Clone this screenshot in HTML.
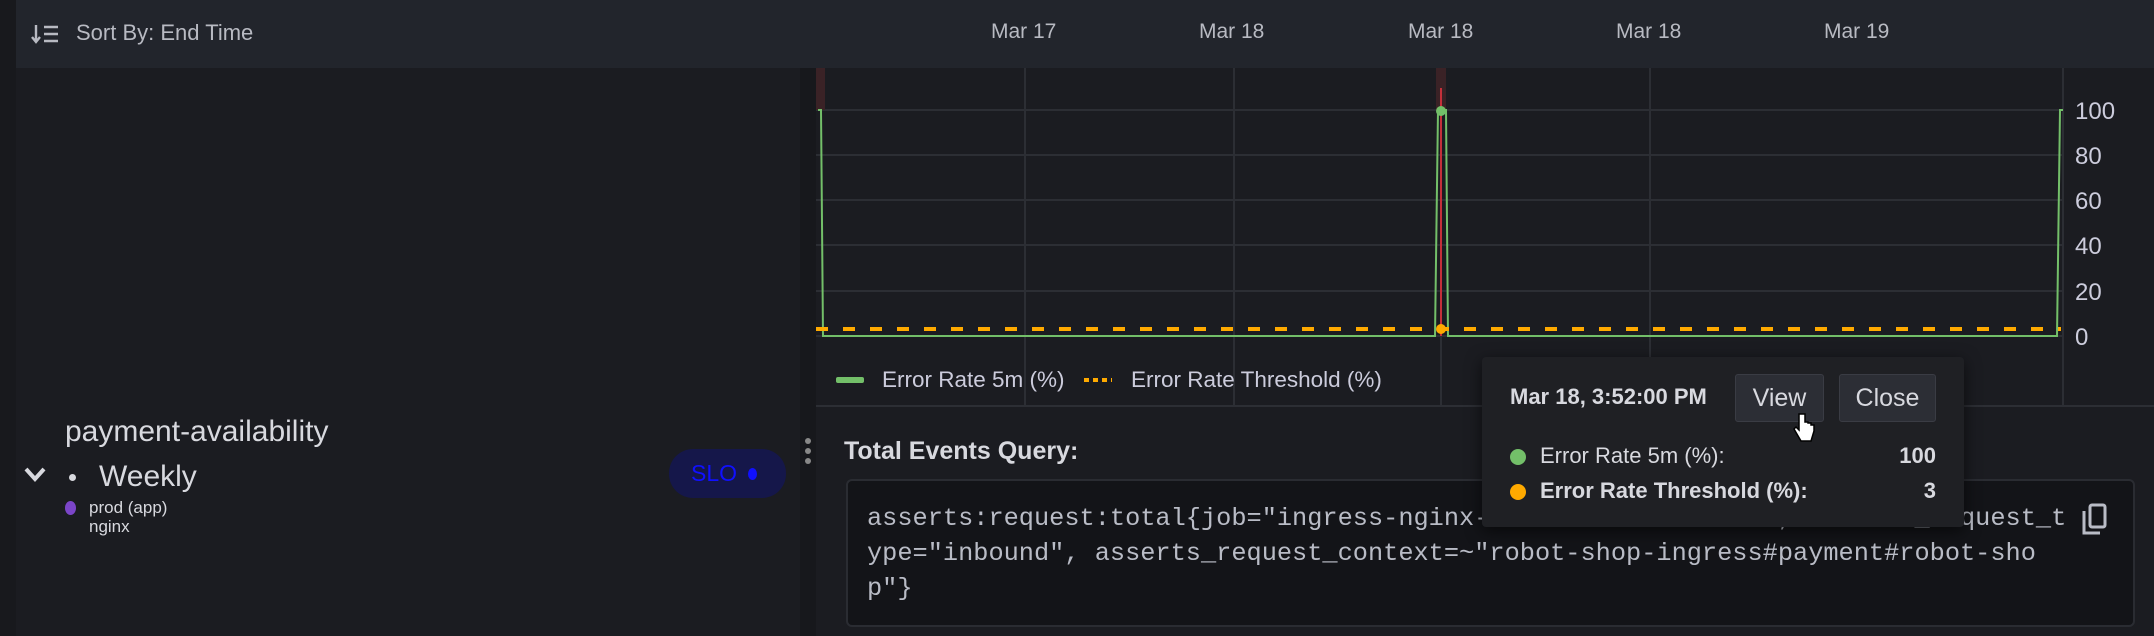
<!DOCTYPE html>
<html><head><meta charset="utf-8"><style>
*{margin:0;padding:0;box-sizing:border-box}
body{width:2154px;height:636px;background:#1b1c21;overflow:hidden;position:relative;font-family:"Liberation Sans",sans-serif;color:#ccccdc}
.a{position:absolute;white-space:nowrap}
.mono{font-family:"Liberation Mono",monospace;font-size:25.3px;color:#b9bcc6}
</style></head><body>
<div class="a" style="left:0;top:0;width:16px;height:636px;background:#18191d"></div>
<div class="a" style="left:16px;top:0;width:2138px;height:68px;background:#22252c"></div>
<svg class="a" style="left:30px;top:22px" width="32" height="24" viewBox="0 0 32 24"><path d="M6 3v16M2 15l4 5 4-5" stroke="#b8bac2" stroke-width="2.4" fill="none"/><path d="M14 5h14M14 12h14M14 19h14" stroke="#b8bac2" stroke-width="2.4"/></svg>
<div class="a" style="left:76px;top:20px;font-size:22px;color:#b8bac2">Sort By: End Time</div>
<div class="a" style="left:991px;top:20px;font-size:21px;color:#b8bac2">Mar 17</div>
<div class="a" style="left:1199px;top:20px;font-size:21px;color:#b8bac2">Mar 18</div>
<div class="a" style="left:1408px;top:20px;font-size:21px;color:#b8bac2">Mar 18</div>
<div class="a" style="left:1616px;top:20px;font-size:21px;color:#b8bac2">Mar 18</div>
<div class="a" style="left:1824px;top:20px;font-size:21px;color:#b8bac2">Mar 19</div>
<div class="a" style="left:800px;top:68px;width:16px;height:568px;background:#17181c"></div>
<svg class="a" style="left:816px;top:68px" width="1338" height="340">
<g stroke="#2c2e34" stroke-width="2">
<line x1="0" y1="42" x2="1247" y2="42"/><line x1="0" y1="87" x2="1247" y2="87"/><line x1="0" y1="132" x2="1247" y2="132"/><line x1="0" y1="177" x2="1247" y2="177"/><line x1="0" y1="223" x2="1247" y2="223"/><line x1="0" y1="268" x2="1247" y2="268"/>
<line x1="209" y1="0" x2="209" y2="338"/><line x1="418" y1="0" x2="418" y2="338"/><line x1="625" y1="0" x2="625" y2="338"/><line x1="834" y1="0" x2="834" y2="338"/><line x1="1247" y1="0" x2="1247" y2="338"/>
<line x1="0" y1="338" x2="1338" y2="338"/>
</g>
<rect x="0" y="0" width="9" height="42" fill="#3a2226"/>
<rect x="620" y="0" width="10" height="42" fill="#3a2226"/>
<line x1="625" y1="20" x2="625" y2="268" stroke="#c4303a" stroke-width="2"/>
<polyline points="2,42 5,42 7,268 619,268 622,42 630,42 632,268 1241,268 1244,42 1247,42" fill="none" stroke="#73bf69" stroke-width="2"/>
<line x1="0" y1="261" x2="1245" y2="261" stroke="#ffaa00" stroke-width="4" stroke-dasharray="12 15"/>
<circle cx="625" cy="43" r="5" fill="#73bf69"/><circle cx="625" cy="261" r="5" fill="#ffaa00"/>
<g fill="#ccccdc" font-size="24" font-family="Liberation Sans">
<text x="1259" y="51">100</text><text x="1259" y="96">80</text><text x="1259" y="141">60</text><text x="1259" y="186">40</text><text x="1259" y="232">20</text><text x="1259" y="277">0</text></g>
<rect x="20" y="309" width="28" height="6" rx="2" fill="#73bf69"/>
<text x="66" y="319" fill="#ccccdc" font-size="22.5" font-family="Liberation Sans">Error Rate 5m (%)</text>
<line x1="268" y1="312" x2="296" y2="312" stroke="#ffaa00" stroke-width="4" stroke-dasharray="5 4"/>
<text x="315" y="319" fill="#ccccdc" font-size="22.5" font-family="Liberation Sans">Error Rate Threshold (%)</text>
</svg>
<div class="a" style="left:65px;top:415px;font-size:30px;color:#d8d9df">payment-availability</div>
<svg class="a" style="left:22px;top:465px" width="28" height="20"><path d="M4 4l9 10 9-10" stroke="#d8d9df" stroke-width="4" fill="none"/></svg>
<div class="a" style="left:69px;top:474px;width:7px;height:7px;border-radius:50%;background:#d8d9df"></div>
<div class="a" style="left:99px;top:460px;font-size:30px;color:#d8d9df">Weekly</div>
<div class="a" style="left:65px;top:501px;width:11px;height:14px;border-radius:50%;background:#7b45c8"></div>
<div class="a" style="left:89px;top:498px;font-size:17px;line-height:19px;color:#d8d9df">prod (app)<br>nginx</div>
<div class="a" style="left:669px;top:449px;width:117px;height:49px;border-radius:24px;background:#15174a;color:#1010ff;font-size:23px;line-height:49px;padding-left:22px">SLO <span style="display:inline-block;width:9px;height:12px;border-radius:50%;background:#1010ff;vertical-align:1px;margin-left:5px"></span></div>
<div class="a" style="left:805px;top:438px;width:6px;height:6px;border-radius:50%;background:#888"></div>
<div class="a" style="left:805px;top:448px;width:6px;height:6px;border-radius:50%;background:#888"></div>
<div class="a" style="left:805px;top:458px;width:6px;height:6px;border-radius:50%;background:#888"></div>
<div class="a" style="left:844px;top:437px;font-size:25px;font-weight:bold;color:#d8d9df">Total Events Query:</div>
<div class="a" style="left:846px;top:479px;width:1289px;height:148px;background:#131418;border:2px solid #2a2c32;border-radius:6px"></div>
<div class="a mono" style="left:867px;top:501px;line-height:35px">asserts:request:total{job="ingress-nginx-controller-metrics", asserts_request_t<br>ype="inbound", asserts_request_context=~"robot-shop-ingress#payment#robot-sho<br>p"}</div>
<svg class="a" style="left:2080px;top:502px" width="30" height="36"><rect x="10" y="3" width="15" height="22" rx="2" stroke="#b9bcc6" stroke-width="3" fill="none"/><path d="M4 9v22h16" stroke="#b9bcc6" stroke-width="3" fill="none"/></svg>
<div class="a" style="left:1482px;top:357px;width:482px;height:170px;background:#1f2024;border-radius:4px;box-shadow:0 4px 16px rgba(0,0,0,.6)"></div>
<div class="a" style="left:1510px;top:384px;font-size:22px;font-weight:bold;color:#d8d9df">Mar 18, 3:52:00 PM</div>
<div class="a" style="left:1735px;top:374px;width:89px;height:48px;background:#2c2e35;border:1px solid #3a3c44;border-radius:3px;font-size:25px;line-height:46px;text-align:center;color:#d8d9df">View</div>
<div class="a" style="left:1839px;top:374px;width:97px;height:48px;background:#2c2e35;border:1px solid #3a3c44;border-radius:3px;font-size:25px;line-height:46px;text-align:center;color:#d8d9df">Close</div>
<div class="a" style="left:1510px;top:449px;width:16px;height:16px;border-radius:50%;background:#73bf69"></div>
<div class="a" style="left:1540px;top:443px;font-size:22px;color:#d8d9df">Error Rate 5m (%):</div>
<div class="a" style="left:1860px;top:443px;width:76px;text-align:right;font-size:22px;font-weight:bold;color:#d8d9df">100</div>
<div class="a" style="left:1510px;top:484px;width:16px;height:16px;border-radius:50%;background:#ffaa00"></div>
<div class="a" style="left:1540px;top:478px;font-size:22px;font-weight:bold;color:#d8d9df">Error Rate Threshold (%):</div>
<div class="a" style="left:1860px;top:478px;width:76px;text-align:right;font-size:22px;font-weight:bold;color:#d8d9df">3</div>
<svg class="a" style="left:1792px;top:412px" width="24" height="34"><path d="M7 2v16l-3-3-2 2 7 12h10l3-10v-6h-3v-2h-3v-1h-3V2z" fill="#fff" stroke="#000" stroke-width="1.5"/></svg>
</body></html>
